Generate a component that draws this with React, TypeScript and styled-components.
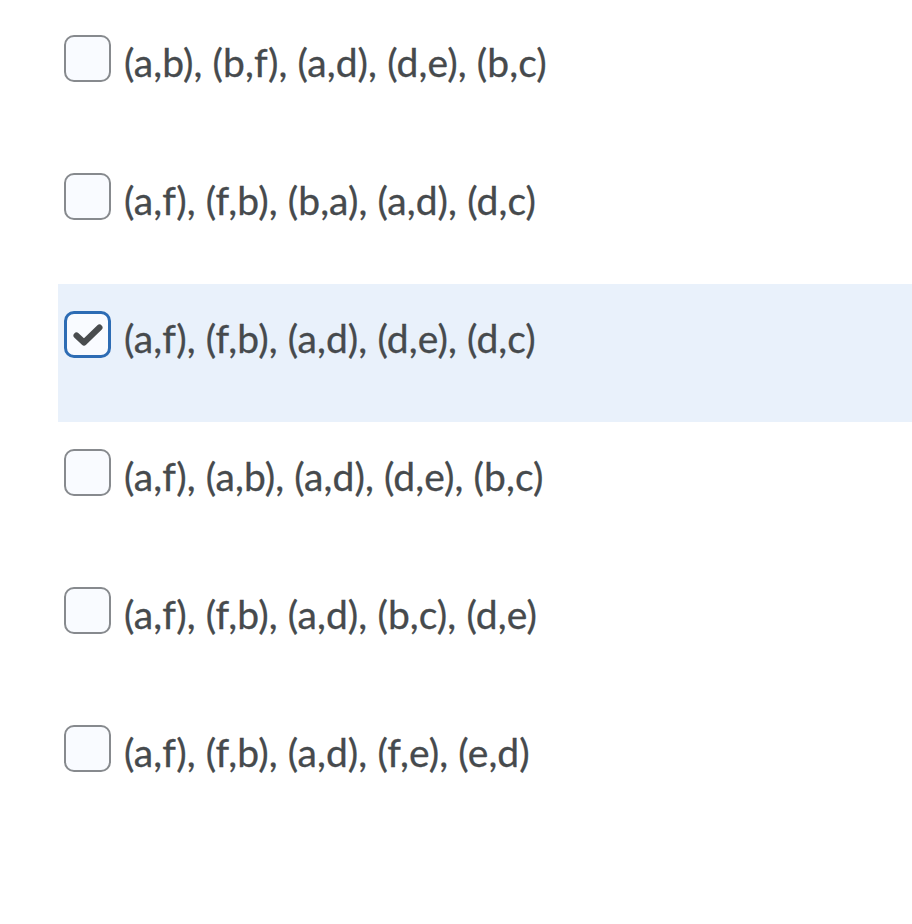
import styled, { createGlobalStyle } from 'styled-components';

const GlobalStyle = createGlobalStyle`
    body {
        margin: 0;
        background: #ffffff;
        font-family: Lato, "Open Sans", sans-serif;
    }
`;

const List = styled.div`
    padding: 8px 0 0 58px;
    display: flex;
    flex-direction: column;
`;

const Row = styled.label<{ selected?: boolean }>`
    height: 138px;
    box-sizing: border-box;
    padding: 27px 0 0 6px;
    display: flex;
    align-items: flex-start;
    gap: 13px;
    background: ${(p) => (p.selected ? '#e9f1fb' : 'transparent')};
`;

const Box = styled.span<{ checked?: boolean }>`
    width: 47px;
    height: 47px;
    box-sizing: border-box;
    flex: none;
    display: flex;
    align-items: center;
    justify-content: center;
    border-radius: 10px;
    background: #f9fbff;
    border: ${(p) => (p.checked ? '3px solid #2d6cb4' : '2px solid #878a8e')};
`;

const Label = styled.span`
    font-size: 39px;
    line-height: 54px;
    letter-spacing: 0.1px;
    color: #464a4d;
    -webkit-text-stroke: 0.3px #464a4d;
`;

const options = [
    '(a,b), (b,f), (a,d), (d,e), (b,c)',
    '(a,f), (f,b), (b,a), (a,d), (d,c)',
    '(a,f), (f,b), (a,d), (d,e), (d,c)',
    '(a,f), (a,b), (a,d), (d,e), (b,c)',
    '(a,f), (f,b), (a,d), (b,c), (d,e)',
    '(a,f), (f,b), (a,d), (f,e), (e,d)',
];

function Check() {
    return (
        <svg width="32" height="24" viewBox="0 0 32 24">
            <path
                d="M4.5 12.5 L12 19.5 L27.5 4.5"
                fill="none"
                stroke="#494c4e"
                strokeWidth="6"
                strokeLinecap="round"
                strokeLinejoin="round"
            />
        </svg>
    );
}

export default function App() {
    const selected = 2;
    return (
        <>
            <GlobalStyle />
            <List>
                {options.map((text, i) => (
                    <Row key={i} selected={i === selected}>
                        <Box checked={i === selected}>{i === selected && <Check />}</Box>
                        <Label>{text}</Label>
                    </Row>
                ))}
            </List>
        </>
    );
}
